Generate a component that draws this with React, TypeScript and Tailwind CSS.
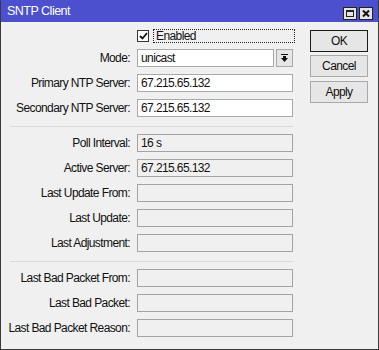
import React from 'react';

const Field = ({ label, value = '', editable = false }: { label: string; value?: string; editable?: boolean }) => (
  <div className="flex items-center h-[18px]">
    <div className="w-[130px] text-right pr-[1px] whitespace-nowrap">{label}</div>
    <div
      className={`ml-[6px] w-[156px] h-[18px] border flex items-center pl-[3px] ${
        editable ? 'bg-white border-[#a9a9a9]' : 'bg-[#f0f0f0] border-[#a3a3a3]'
      }`}
    >
      {value}
    </div>
  </div>
);

const Divider = () => <div className="ml-[9px] w-[283px] h-px bg-[#dadada]" />;

const WinButton = ({ label, primary = false }: { label: string; primary?: boolean }) => (
  <div
    className={`w-[58px] h-[22px] flex items-center justify-center bg-[#e6e6e6] border ${
      primary ? 'border-[#1a1a1a]' : 'border-[#a8a8a8]'
    }`}
  >
    {label}
  </div>
);

export default function App() {
  return (
    <div className="w-[379px] h-[350px] flex flex-col border border-[#3a3a3a] border-t-[#4c50cf] bg-[#f0f0f0] text-[12px] tracking-[-0.6px] text-[#111] font-['Liberation_Sans',Arial,sans-serif]">
      {/* Title bar */}
      <div className="h-[21px] bg-[#4c50cf] flex items-center pl-[6px] pr-[5px] text-white">
        <span className="flex-1 text-[12.5px] tracking-[-0.5px]">SNTP Client</span>
        <div className="flex gap-[2px] mt-[3px]">
          <div className="w-[14px] h-[13px] bg-[#e4e4e4] border border-[#222] flex items-center justify-center">
            <div className="w-[8px] h-[7px] border border-[#222] border-t-2" />
          </div>
          <div className="w-[14px] h-[13px] bg-[#e4e4e4] border border-[#222] flex items-center justify-center">
            <svg width="8" height="7" viewBox="0 0 8 7">
              <path d="M1 0.5 L7 6.5 M7 0.5 L1 6.5" stroke="#111" strokeWidth="2" />
            </svg>
          </div>
        </div>
      </div>

      {/* Body */}
      <div className="flex flex-1">
        <div className="w-[300px] flex flex-col pt-[7px]">
          {/* Enabled */}
          <div className="flex items-center h-[14px]">
            <div className="w-[136px]" />
            <div className="w-[12px] h-[12px] bg-white border border-[#333] flex items-center justify-center">
              <svg width="9" height="8" viewBox="0 0 9 8">
                <path d="M1 4 L3.5 6.5 L8 1" stroke="#111" strokeWidth="1.8" fill="none" />
              </svg>
            </div>
            <div className="ml-[4px] w-[142px] h-[14px] border border-dotted border-[#222] flex items-center pl-[2px]">
              Enabled
            </div>
          </div>

          <div className="flex flex-col gap-[7px] mt-[6px]">
            <div className="flex items-center h-[18px]">
              <div className="w-[130px] text-right pr-[1px]">Mode:</div>
              <div className="ml-[6px] w-[137px] h-[18px] bg-white border border-[#a9a9a9] flex items-center pl-[3px]">
                unicast
              </div>
              <div className="ml-[2px] w-[17px] h-[18px] bg-[#e6e6e6] border border-[#a8a8a8] flex items-center justify-center">
                <svg width="7" height="8" viewBox="0 0 7 8">
                  <rect x="0" y="0" width="7" height="1" fill="#111" />
                  <rect x="2" y="2" width="3" height="2" fill="#111" />
                  <path d="M0 4 H7 L3.5 8 Z" fill="#111" />
                </svg>
              </div>
            </div>
            <Field label="Primary NTP Server:" value="67.215.65.132" editable />
            <Field label="Secondary NTP Server:" value="67.215.65.132" editable />
          </div>

          <div className="mt-[9px]">
            <Divider />
          </div>

          <div className="flex flex-col gap-[7px] mt-[7px]">
            <Field label="Poll Interval:" value="16 s" />
            <Field label="Active Server:" value="67.215.65.132" />
            <Field label="Last Update From:" />
            <Field label="Last Update:" />
            <Field label="Last Adjustment:" />
          </div>

          <div className="mt-[9px]">
            <Divider />
          </div>

          <div className="flex flex-col gap-[7px] mt-[7px]">
            <Field label="Last Bad Packet From:" />
            <Field label="Last Bad Packet:" />
            <Field label="Last Bad Packet Reason:" />
          </div>
        </div>

        {/* Buttons */}
        <div className="flex flex-col pl-[9px] pt-[8px]">
          <WinButton label="OK" primary />
          <div className="mt-[3px]">
            <WinButton label="Cancel" />
          </div>
          <div className="mt-[4px]">
            <WinButton label="Apply" />
          </div>
        </div>
      </div>
    </div>
  );
}
